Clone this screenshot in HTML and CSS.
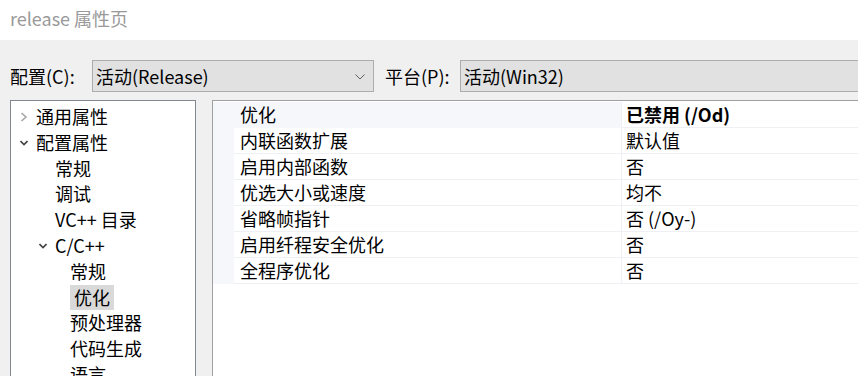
FILE: index.html
```html
<!DOCTYPE html>
<html lang="zh-CN">
<head>
    <meta charset="UTF-8">
    <title>release 属性页</title>
    <link rel="stylesheet" href="styles.css">
</head>
<body>
    <div class="titlebar">release 属性页</div>

    <div class="toolbar">
        <span class="label">配置(C):</span>
        <div class="combo combo-config">
            <span>活动(Release)</span>
            <svg class="combo-arrow" width="10" height="6" viewBox="0 0 10 6"><path d="M0.5 0.5 L5 5 L9.5 0.5" fill="none" stroke="#606060" stroke-width="1"/></svg>
        </div>
        <span class="label label-platform">平台(P):</span>
        <div class="combo combo-platform">
            <span>活动(Win32)</span>
        </div>
    </div>

    <div class="main">
        <div class="tree">
            <div class="node lvl0">
                <svg class="twisty" width="8" height="10" viewBox="0 0 8 10"><path d="M1.5 1 L6 5 L1.5 9" fill="none" stroke="#a6a6a6" stroke-width="1.6"/></svg>
                通用属性
            </div>
            <div class="node lvl0">
                <svg class="twisty" width="8" height="10" viewBox="0 0 8 10"><path d="M0.5 3 L4 6.5 L7.5 3" fill="none" stroke="#404040" stroke-width="1.6"/></svg>
                配置属性
            </div>
            <div class="node lvl1">常规</div>
            <div class="node lvl1">调试</div>
            <div class="node lvl1">VC++ 目录</div>
            <div class="node lvl1 parent">
                <svg class="twisty" width="8" height="10" viewBox="0 0 8 10"><path d="M0.5 3 L4 6.5 L7.5 3" fill="none" stroke="#404040" stroke-width="1.6"/></svg>
                C/C++
            </div>
            <div class="node lvl2">常规</div>
            <div class="node lvl2"><span class="selected">优化</span></div>
            <div class="node lvl2">预处理器</div>
            <div class="node lvl2">代码生成</div>
            <div class="node lvl2">语言</div>
        </div>

        <div class="grid">
            <div class="row active">
                <div class="gutter"></div>
                <div class="name">优化</div>
                <div class="value bold">已禁用 (/Od)</div>
            </div>
            <div class="row">
                <div class="gutter"></div>
                <div class="name">内联函数扩展</div>
                <div class="value">默认值</div>
            </div>
            <div class="row">
                <div class="gutter"></div>
                <div class="name">启用内部函数</div>
                <div class="value">否</div>
            </div>
            <div class="row">
                <div class="gutter"></div>
                <div class="name">优选大小或速度</div>
                <div class="value">均不</div>
            </div>
            <div class="row">
                <div class="gutter"></div>
                <div class="name">省略帧指针</div>
                <div class="value">否 (/Oy-)</div>
            </div>
            <div class="row">
                <div class="gutter"></div>
                <div class="name">启用纤程安全优化</div>
                <div class="value">否</div>
            </div>
            <div class="row">
                <div class="gutter"></div>
                <div class="name">全程序优化</div>
                <div class="value">否</div>
            </div>
        </div>
    </div>
</body>
</html>
```

FILE: styles.css
```css
body {
    margin: 0;
    width: 858px;
    height: 376px;
    overflow: hidden;
    background: #f0f0f0;
    font-family: "Noto Sans CJK SC", "Noto Sans", sans-serif;
    font-size: 18px;
    color: #000;
}

.titlebar {
    height: 40px;
    line-height: 36px;
    padding-left: 10px;
    background: #fff;
    color: #999;
}

.toolbar {
    display: flex;
    align-items: center;
    height: 32px;
    padding: 20px 0 8px 10px;
}

.label {
    width: 82px;
    line-height: 32px;
}

.label-platform {
    width: 75px;
    margin-left: 11px;
}

.combo {
    box-sizing: border-box;
    height: 32px;
    border: 1px solid #adadad;
    background: #e1e1e1;
    display: flex;
    align-items: center;
    padding-left: 3px;
}

.combo-config {
    width: 282px;
    justify-content: space-between;
    padding-right: 8px;
}

.combo-platform {
    flex: 1;
    margin-right: -20px;
}

.combo-arrow {
    margin-top: 2px;
}

.main {
    display: flex;
    padding-left: 10px;
    gap: 16px;
    height: 276px;
}

.tree {
    box-sizing: border-box;
    width: 186px;
    border: 1px solid #828790;
    border-bottom: none;
    background: #fff;
    padding-top: 3px;
}

.node {
    position: relative;
    height: 25.8px;
    line-height: 25.8px;
    white-space: nowrap;
}

.lvl0 { padding-left: 25px; }
.lvl1 { padding-left: 44px; }
.lvl2 { padding-left: 59px; }

.twisty {
    position: absolute;
    top: 8px;
}

.lvl0 .twisty { left: 9px; }
.parent .twisty { left: 28px; }

.selected {
    display: inline-block;
    background: #d9d9d9;
    padding: 0 4px;
}

.grid {
    flex: 1;
    margin-right: -20px;
    border-top: 1px solid #a0a0a0;
    border-left: 1px solid #a0a0a0;
    background: #fff;
    padding-top: 1px;
}

.row {
    display: flex;
    height: 26px;
    line-height: 25px;
}

.gutter {
    width: 21px;
    background: #f5f7fb;
}

.name {
    box-sizing: border-box;
    width: 388px;
    padding-left: 6px;
    border-bottom: 1px solid #eef0f3;
    border-right: 1px solid #eef0f3;
}

.row.active .name {
    background: #f5f7fb;
    border-bottom-color: #f5f7fb;
}

.value {
    flex: 1;
    padding-left: 4px;
    border-bottom: 1px solid #eef0f3;
}

.bold {
    font-weight: bold;
}
```
